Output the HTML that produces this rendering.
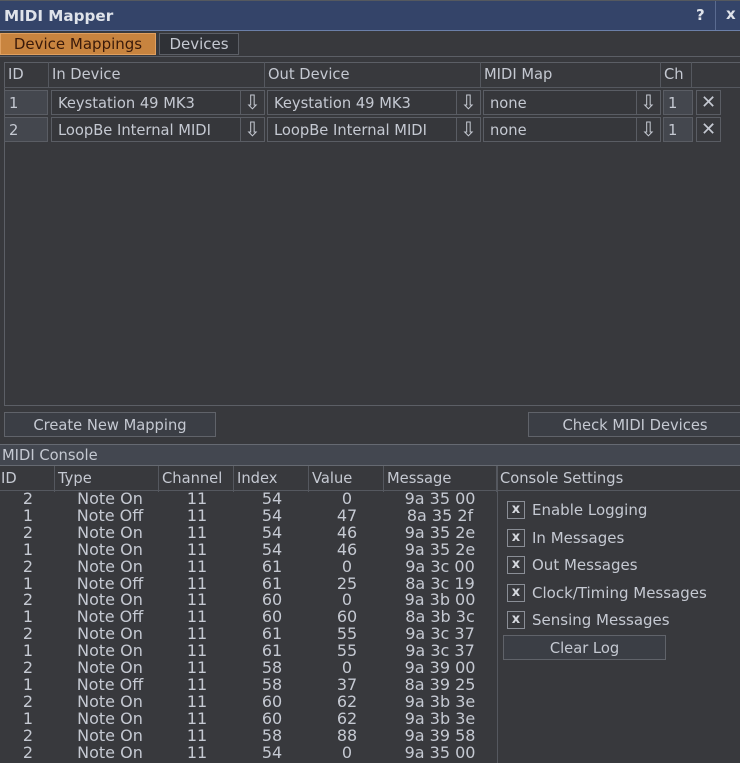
<!DOCTYPE html>
<html><head><meta charset="utf-8"><style>
*{margin:0;padding:0;box-sizing:border-box}
body{width:740px;height:763px;background:#38393d;font-family:"DejaVu Sans","Liberation Sans",sans-serif;color:#c5c9d2;font-size:14.7px;position:relative;overflow:hidden}
.a{position:absolute}
.t{white-space:nowrap}
.box{position:absolute;border:1px solid #5c5f66}
.fld{position:absolute;border:1px solid #5a5d64;background:#36373b;padding-left:6px;line-height:25px;white-space:nowrap}
.arr{position:absolute;border:1px solid #5a5d64;text-align:center;line-height:23px;font-size:20px}
.hd{position:absolute;line-height:26px;padding-left:3px;border-right:1px solid #55585f;white-space:nowrap}
.btn{position:absolute;border:1px solid #60636a;background:#3b3e45;text-align:center;line-height:25px;white-space:nowrap}
.rows{position:absolute;top:491px;font-size:16px;line-height:16.9px;text-align:center}
.cb{position:absolute;left:507px;width:18px;height:18px;border:1px solid #8a8e96;font-size:13px;font-weight:bold;text-align:center;line-height:16px;color:#d5d8de}
.cl{position:absolute;left:532px;font-size:15px;white-space:nowrap}
</style></head><body>
<div class="a" style="left:0;top:0;width:740px;height:31px;background:#344469;border-bottom:1px solid #6b7fa8;border-top:1px solid #55595f"></div>
<div class="a t" style="left:4px;top:7px;font-weight:bold;font-size:15.2px;color:#dfe3ea">MIDI Mapper</div>
<div class="a t" style="left:696px;top:6px;font-weight:bold;font-size:15px;color:#dfe3ea">?</div>
<div class="a" style="left:715px;top:1px;width:1px;height:29px;background:#5a6b90"></div>
<div class="a t" style="left:726px;top:5px;font-weight:bold;font-size:15px;color:#dfe3ea">x</div>

<div class="a t" style="left:0;top:33px;width:156px;height:22px;background:#c8843f;border:1px solid #e0a060;color:#3a1a0a;text-align:center;line-height:21px;font-size:15px">Device Mappings</div>
<div class="a t" style="left:159px;top:33px;width:80px;height:22px;background:#2f3136;border:1px solid #5c5f66;text-align:center;line-height:21px;font-size:15px">Devices</div>
<div class="a" style="left:0;top:56px;width:740px;height:1px;background:#5c5f66"></div>

<div class="box" style="left:4px;top:62px;width:740px;height:344px"></div>
<div class="a" style="left:4px;top:62px;width:736px;height:26px;border-bottom:1px solid #55585f"></div>
<div class="hd" style="left:5px;top:62px;width:44px">ID</div>
<div class="hd" style="left:49px;top:62px;width:216px">In Device</div>
<div class="hd" style="left:265px;top:62px;width:216px">Out Device</div>
<div class="hd" style="left:481px;top:62px;width:180px">MIDI Map</div>
<div class="hd" style="left:661px;top:62px;width:31px">Ch</div>

<div class="fld" style="left:4px;top:90px;width:44px;height:25px;background:#44474e;padding-left:4px">1</div>
<div class="fld" style="left:51px;top:90px;width:190px;height:25px">Keystation 49 MK3</div>
<div class="arr" style="left:240px;top:90px;width:25px;height:25px">⇩</div>
<div class="fld" style="left:267px;top:90px;width:190px;height:25px">Keystation 49 MK3</div>
<div class="arr" style="left:456px;top:90px;width:25px;height:25px">⇩</div>
<div class="fld" style="left:483px;top:90px;width:154px;height:25px">none</div>
<div class="arr" style="left:636px;top:90px;width:25px;height:25px">⇩</div>
<div class="fld" style="left:663px;top:90px;width:30px;height:25px;background:#44474e;padding-left:4px">1</div>
<div class="arr" style="left:696px;top:90px;width:25px;height:25px;font-size:18px">✕</div>

<div class="fld" style="left:4px;top:117px;width:44px;height:25px;background:#44474e;padding-left:4px">2</div>
<div class="fld" style="left:51px;top:117px;width:190px;height:25px">LoopBe Internal MIDI</div>
<div class="arr" style="left:240px;top:117px;width:25px;height:25px">⇩</div>
<div class="fld" style="left:267px;top:117px;width:190px;height:25px">LoopBe Internal MIDI</div>
<div class="arr" style="left:456px;top:117px;width:25px;height:25px">⇩</div>
<div class="fld" style="left:483px;top:117px;width:154px;height:25px">none</div>
<div class="arr" style="left:636px;top:117px;width:25px;height:25px">⇩</div>
<div class="fld" style="left:663px;top:117px;width:30px;height:25px;background:#44474e;padding-left:4px">1</div>
<div class="arr" style="left:696px;top:117px;width:25px;height:25px;font-size:18px">✕</div>

<div class="btn" style="left:4px;top:412px;width:212px;height:25px">Create New Mapping</div>
<div class="btn" style="left:528px;top:412px;width:214px;height:25px">Check MIDI Devices</div>

<div class="a" style="left:0;top:444px;width:740px;height:22px;background:#434750;border-top:1px solid #666a72;border-bottom:1px solid #666a72"></div>
<div class="a t" style="left:2px;top:447px">MIDI Console</div>

<div class="a" style="left:0;top:466px;width:740px;height:25px;border-bottom:1px solid #55585f"></div>
<div class="hd" style="left:-2px;top:466px;width:57px">ID</div>
<div class="hd" style="left:55px;top:466px;width:104px">Type</div>
<div class="hd" style="left:159px;top:466px;width:75px">Channel</div>
<div class="hd" style="left:234px;top:466px;width:75px">Index</div>
<div class="hd" style="left:309px;top:466px;width:75px">Value</div>
<div class="hd" style="left:384px;top:466px;width:113px">Message</div>
<div class="hd" style="left:497px;top:466px;width:243px;border:none">Console Settings</div>
<div class="a" style="left:497px;top:466px;width:1px;height:297px;background:#55585f"></div>

<div class="rows" style="left:0;width:56px">2<br>1<br>2<br>1<br>2<br>1<br>2<br>1<br>2<br>1<br>2<br>1<br>2<br>1<br>2<br>2</div>
<div class="rows" style="left:55px;width:110px">Note On<br>Note Off<br>Note On<br>Note On<br>Note On<br>Note Off<br>Note On<br>Note Off<br>Note On<br>Note On<br>Note On<br>Note Off<br>Note On<br>Note On<br>Note On<br>Note On</div>
<div class="rows" style="left:159px;width:76px">11<br>11<br>11<br>11<br>11<br>11<br>11<br>11<br>11<br>11<br>11<br>11<br>11<br>11<br>11<br>11</div>
<div class="rows" style="left:234px;width:76px">54<br>54<br>54<br>54<br>61<br>61<br>60<br>60<br>61<br>61<br>58<br>58<br>60<br>60<br>58<br>54</div>
<div class="rows" style="left:309px;width:76px">0<br>47<br>46<br>46<br>0<br>25<br>0<br>60<br>55<br>55<br>0<br>37<br>62<br>62<br>88<br>0</div>
<div class="rows" style="left:384px;width:112px">9a 35 00<br>8a 35 2f<br>9a 35 2e<br>9a 35 2e<br>9a 3c 00<br>8a 3c 19<br>9a 3b 00<br>8a 3b 3c<br>9a 3c 37<br>9a 3c 37<br>9a 39 00<br>8a 39 25<br>9a 3b 3e<br>9a 3b 3e<br>9a 39 58<br>9a 35 00</div>

<div class="cb" style="top:501px">x</div><div class="cl" style="top:501px">Enable Logging</div>
<div class="cb" style="top:529px">x</div><div class="cl" style="top:529px">In Messages</div>
<div class="cb" style="top:556px">x</div><div class="cl" style="top:556px">Out Messages</div>
<div class="cb" style="top:584px">x</div><div class="cl" style="top:584px">Clock/Timing Messages</div>
<div class="cb" style="top:611px">x</div><div class="cl" style="top:611px">Sensing Messages</div>
<div class="btn" style="left:503px;top:635px;width:163px;height:25px">Clear Log</div>
</body></html>
